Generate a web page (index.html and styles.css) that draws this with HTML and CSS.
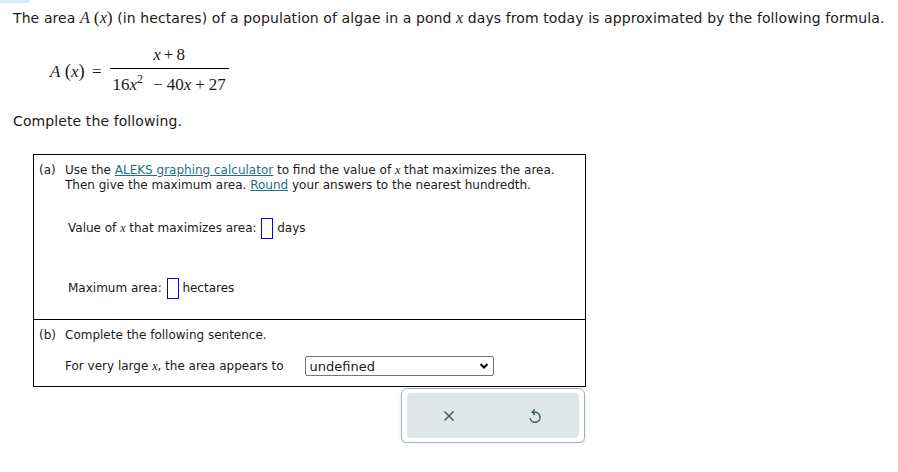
FILE: index.html
```html
<!DOCTYPE html>
<html>
<head>
<meta charset="utf-8">
<link rel="stylesheet" href="styles.css">
</head>
<body>
<div class="tab"></div>
<div class="page">
  <p class="intro">The area <span class="m"><i>A</i> <span class="paren">(</span><i>x</i><span class="paren">)</span></span> (in hectares) of a population of algae in a pond <i class="m">x</i> days from today is approximated by the following formula.</p>

  <div class="formula">
    <span class="lhs"><i>A</i> <span class="paren">(</span><i>x</i><span class="paren">)</span> <span class="op">=</span></span>
    <span class="frac">
      <span class="num"><i>x</i><span class="op">+</span>8</span>
      <span class="den">16<i>x</i><sup>2</sup><span class="op">&minus;</span>40<i>x</i><span class="op">+</span>27</span>
    </span>
  </div>

  <p class="complete">Complete the following.</p>

  <div class="box">
    <div class="part part-a">
      <div class="qline">
        <span class="label">(a)</span>
        <span class="qtext">Use the <a href="#">ALEKS graphing calculator</a> to find the value of <i class="m">x</i> that maximizes the area.<br>Then give the maximum area. <a href="#">Round</a> your answers to the nearest hundredth.</span>
      </div>
      <div class="answer first"><span>Value of <i class="m">x</i> that maximizes area: </span><span class="input"></span><span> days</span></div>
      <div class="answer second"><span>Maximum area: </span><span class="input"></span><span> hectares</span></div>
    </div>
    <div class="part part-b">
      <div class="qline"><span class="label">(b)</span><span>Complete the following sentence.</span></div>
      <div class="sentence"><span class="stext">For very large <i class="m">x</i>, the area appears to</span>
        <span class="select"><span>undefined</span>
          <svg width="10" height="8" viewBox="0 0 10 8"><path d="M1.5 2 L5 5.5 L8.5 2" fill="none" stroke="#000" stroke-width="2"/></svg>
        </span>
      </div>
    </div>
  </div>

  <div class="actions">
    <div class="actions-inner">
      <svg width="14" height="14" viewBox="0 0 14 14"><path d="M2.5 2.5 L11.5 11.5 M11.5 2.5 L2.5 11.5" stroke="#3d5d69" stroke-width="1.5" fill="none"/></svg>
      <svg width="14" height="16" viewBox="0 0 14 16"><path d="M4.4 4.3 L7 4.3 A5 5 0 1 1 2.2 10.6" stroke="#3d5d69" stroke-width="1.5" fill="none" stroke-linecap="round"/><path d="M6.3 1.9 L4.3 4.3 L6.4 6.4" stroke="#3d5d69" stroke-width="1.5" fill="none" stroke-linecap="round" stroke-linejoin="round"/></svg>
    </div>
  </div>
</div>
</body>
</html>
```
FILE: styles.css
```css
html, body { margin: 0; padding: 0; background: #fff; }
body {
  font-family: "DejaVu Sans", Verdana, sans-serif;
  color: #1a1a1a;
  position: relative;
}
.tab {
  position: absolute;
  left: 0; top: 0;
  width: 30px; height: 3px;
  background: #d6edf5;
  border-bottom-right-radius: 3px;
}
.page { padding: 0 0 0 13px; }
.m, .formula { font-family: "Liberation Serif", "Times New Roman", serif; }
i.m, .m i, .formula i { font-style: italic; }
.intro {
  margin: 0;
  padding-top: 8px;
  font-size: 14px;
  line-height: 19px;
  letter-spacing: 0.1px;
}
.intro .m { font-size: 16px; letter-spacing: 0; }
.paren { font-style: normal; font-size: 1.1em; }
.formula {
  display: flex;
  align-items: flex-start;
  margin: 15px 0 0 37px;
  font-size: 17px;
  height: 52px;
}
.op { margin: 0 3px; }
.lhs { margin-right: 5px; margin-top: 18px; line-height: 20px; }
.frac {
  display: inline-flex;
  flex-direction: column;
  align-items: center;
  margin-top: 2px;
}
.num {
  padding: 0 4px 3px;
  line-height: 20px;
  border-bottom: 1px solid #000;
  align-self: stretch;
  text-align: center;
}
.num .op { margin: 0 3px; }
.den { line-height: 24px; padding: 4px 3px 0; }
.den sup { font-size: 12px; vertical-align: 7px; line-height: 0; margin-right: 6px; }
.den .op { margin: 0 4px; }
.complete {
  margin: 17px 0 0 0;
  font-size: 14px;
  line-height: 19px;
  letter-spacing: 0.1px;
}
.box {
  margin: 23px 0 0 20px;
  width: 551px;
  border: 1px solid #000;
  font-size: 12px;
  line-height: 15px;
}
.part-a { height: 165px; border-bottom: 1px solid #000; padding: 8px 0 0 5px; box-sizing: border-box; }
.qline { display: flex; }
.label { width: 26px; flex: none; }
a { color: #1f6e8c; text-decoration: underline; }
.answer { margin-left: 29px; height: 21px; line-height: 21px; }
.answer span { vertical-align: middle; }
.answer .input {
  display: inline-block;
  width: 10px; height: 19px;
  border: 1px solid #0000ff;
  margin: 0 0 0 1px;
}
.answer.first { margin-top: 25px; }
.answer.second { margin-top: 39px; }
.part-b { padding: 8px 0 0 5px; height: 66px; box-sizing: border-box; }
.sentence { margin: 13px 0 0 26px; display: flex; align-items: center; }
.stext { white-space: pre; }
.select {
  margin-left: 21px;
  width: 189px; height: 20px;
  box-sizing: border-box;
  border: 1px solid #767676;
  border-radius: 2px;
  display: flex;
  align-items: center;
  justify-content: space-between;
  padding: 0 4px 0 4px;
  font-size: 13px;
}
.actions {
  margin: 1px 0 0 388px;
  width: 184px; height: 55px;
  box-sizing: border-box;
  border: 1px solid #9fb2b8;
  border-radius: 6px;
  padding: 4px 5px;
  box-shadow: 0 2px 3px rgba(0,0,0,0.12);
  background: #fff;
}
.actions-inner {
  background: #dfe6e8;
  border-radius: 4px;
  height: 100%;
  display: flex;
  align-items: center;
  justify-content: space-between;
  padding: 0 37px 0 35px;
}
```
